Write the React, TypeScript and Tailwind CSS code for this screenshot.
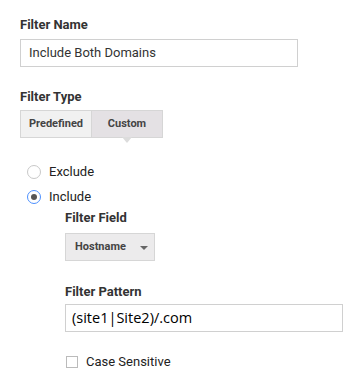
import React from 'react';

const label = "text-[13px] font-bold text-[#333] leading-4";

const App = () => {
  const [type, setType] = React.useState<'predefined' | 'custom'>('custom');
  const [mode, setMode] = React.useState<'exclude' | 'include'>('include');

  return (
    <div className="w-[363px] h-[387px] bg-white pl-5 pt-[17px] font-['Roboto',sans-serif] text-[#222]">
      {/* Filter name */}
      <div className={label}>Filter Name</div>
      <div className="mt-[6px] w-[278px] h-7 border border-[#d0d0d0] flex items-center pl-2 text-[13px] text-[#333]">
        Include Both Domains
      </div>

      {/* Filter type */}
      <div className={`${label} mt-[22px]`}>Filter Type</div>
      <div className="mt-[5px] flex w-[143px] h-7 border border-[#d6d6d6] text-[11px] font-bold text-[#444]">
        <button
          onClick={() => setType('predefined')}
          className={`w-[71px] border-r border-[#d6d6d6] ${type === 'predefined' ? 'bg-[#e4e1e4]' : 'bg-[#f1f1f1]'}`}>
          Predefined
        </button>
        <button
          onClick={() => setType('custom')}
          className={`relative flex-1 ${type === 'custom' ? 'bg-[#e4e1e4]' : 'bg-[#f1f1f1]'}`}>
          Custom
          {type === 'custom' && (
            <span className="absolute left-1/2 -translate-x-1/2 top-full w-0 h-0 border-l-[5px] border-r-[5px] border-t-[6px] border-l-transparent border-r-transparent border-t-[#dcdcdc]" />
          )}
        </button>
      </div>

      {/* Exclude / include */}
      <div className="mt-[27px] pl-[7px] flex flex-col gap-[11px] text-[13px] text-[#222]">
        {(['exclude', 'include'] as const).map((m) => (
          <label key={m} className="flex items-center gap-2 h-[14px] cursor-pointer" onClick={() => setMode(m)}>
            <span
              className={`w-[14px] h-[14px] rounded-full border flex items-center justify-center ${
                mode === m ? 'border-[#4d90fe]' : 'border-[#c8c8c8]'
              }`}>
              {mode === m && <span className="w-[6px] h-[6px] rounded-full bg-[#555]" />}
            </span>
            {m === 'exclude' ? 'Exclude' : 'Include'}
          </label>
        ))}
      </div>

      <div className="pl-[45px]">
        <div className={`${label} mt-[6px]`}>Filter Field</div>
        <div className="mt-[7px] w-[90px] h-7 border border-[#d6d6d6] bg-[#ecebec] flex items-center pl-[9px] text-[11px] font-bold text-[#444]">
          Hostname
          <span className="ml-[14px] mt-[2px] w-0 h-0 border-l-[4px] border-r-[4px] border-t-[4px] border-l-transparent border-r-transparent border-t-[#666]" />
        </div>

        <div className={`${label} mt-[23px]`}>Filter Pattern</div>
        <div className="mt-[4px] w-[278px] h-7 border border-[#d0d0d0] flex items-center pl-[6px] text-[14.5px] text-black font-['Open_Sans',sans-serif]">
          (site1|Site2)/.com
        </div>

        <label className="mt-6 flex items-center gap-2 text-[13px] text-[#222] h-3">
          <span className="ml-px w-3 h-3 border border-[#bbb]" />
          Case Sensitive
        </label>
      </div>
    </div>
  );
};

export default App;
